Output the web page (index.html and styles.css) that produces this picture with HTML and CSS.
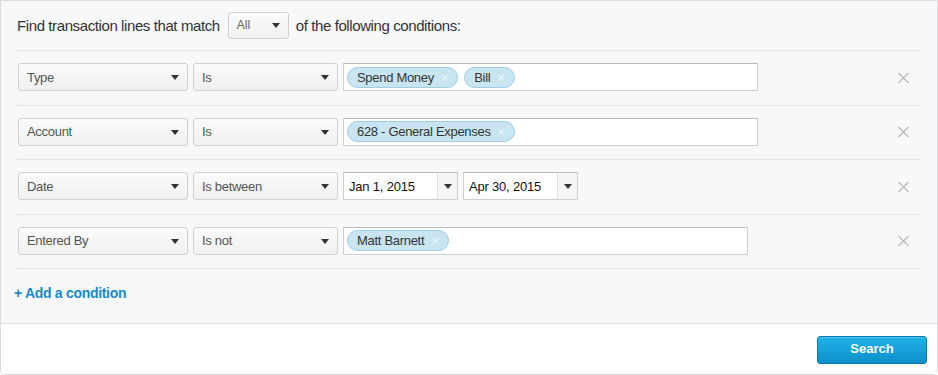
FILE: index.html
```html
<!DOCTYPE html>
<html>
<head>
<meta charset="utf-8">
<link rel="stylesheet" href="styles.css">
</head>
<body>
<div class="panel">
  <div class="panel-body">
    <div class="intro">
      <span>Find transaction lines that match</span>
      <div class="select select-match"><span>All</span><i class="caret"></i></div>
      <span>of the following conditions:</span>
    </div>
    <div class="conditions">
      <div class="cond">
        <div class="select select-field"><span>Type</span><i class="caret"></i></div>
        <div class="select select-op"><span>Is</span><i class="caret"></i></div>
        <div class="tokens">
          <span class="tag">Spend Money<b class="tag-x">×</b></span>
          <span class="tag">Bill<b class="tag-x">×</b></span>
        </div>
        <svg class="remove" width="11" height="11" viewBox="0 0 11 11"><path d="M0.5 0.5L10.5 10.5M10.5 0.5L0.5 10.5" stroke="#b8babd" stroke-width="1.2"/></svg>
      </div>
      <div class="cond">
        <div class="select select-field"><span>Account</span><i class="caret"></i></div>
        <div class="select select-op"><span>Is</span><i class="caret"></i></div>
        <div class="tokens">
          <span class="tag">628 - General Expenses<b class="tag-x">×</b></span>
        </div>
        <svg class="remove" width="11" height="11" viewBox="0 0 11 11"><path d="M0.5 0.5L10.5 10.5M10.5 0.5L0.5 10.5" stroke="#b8babd" stroke-width="1.2"/></svg>
      </div>
      <div class="cond">
        <div class="select select-field"><span>Date</span><i class="caret"></i></div>
        <div class="select select-op"><span>Is between</span><i class="caret"></i></div>
        <div class="date"><span class="date-val">Jan 1, 2015</span><span class="date-btn"><i class="caret"></i></span></div>
        <div class="date"><span class="date-val">Apr 30, 2015</span><span class="date-btn"><i class="caret"></i></span></div>
        <svg class="remove" width="11" height="11" viewBox="0 0 11 11"><path d="M0.5 0.5L10.5 10.5M10.5 0.5L0.5 10.5" stroke="#b8babd" stroke-width="1.2"/></svg>
      </div>
      <div class="cond">
        <div class="select select-field"><span>Entered By</span><i class="caret"></i></div>
        <div class="select select-op"><span>Is not</span><i class="caret"></i></div>
        <div class="tokens tokens-short">
          <span class="tag">Matt Barnett<b class="tag-x">×</b></span>
        </div>
        <svg class="remove" width="11" height="11" viewBox="0 0 11 11"><path d="M0.5 0.5L10.5 10.5M10.5 0.5L0.5 10.5" stroke="#b8babd" stroke-width="1.2"/></svg>
      </div>
    </div>
    <div class="add-row"><a class="add-link">+ Add a condition</a></div>
  </div>
  <div class="panel-foot">
    <button class="btn-search">Search</button>
  </div>
</div>
</body>
</html>
```

FILE: styles.css
```css
* { box-sizing: border-box; }
html, body { margin: 0; padding: 0; background: #fff; }
body {
  font-family: "Liberation Sans", Arial, sans-serif;
  color: #333;
  width: 938px;
  height: 375px;
  overflow: hidden;
}
.panel {
  width: 938px;
  height: 375px;
  border: 1px solid #d9dbde;
  border-radius: 0 0 5px 5px;
  display: flex;
  flex-direction: column;
  overflow: hidden;
}
.panel-body {
  background: #f7f8fa;
  height: 323px;
  border-bottom: 1px solid #dcdee1;
}
.intro {
  height: 49px;
  display: flex;
  align-items: center;
  padding-left: 16px;
  font-size: 15px;
  letter-spacing: -0.4px;
  color: #333;
  gap: 8px;
}
.intro .select-match { margin-right: -1px; letter-spacing: 0; }
.select {
  display: flex;
  align-items: center;
  justify-content: space-between;
  height: 28px;
  border: 1px solid #cfd1d4;
  border-radius: 3px;
  background: linear-gradient(#fbfbfb, #eff0f1);
  font-size: 13px;
  letter-spacing: -0.3px;
  color: #555;
  padding: 0 8px 0 8px;
}
.select-match { width: 61px; height: 27px; font-size: 12px; color: #666; margin-top: -1px; }
.caret {
  display: block;
  width: 0;
  height: 0;
  border-left: 4px solid transparent;
  border-right: 4px solid transparent;
  border-top: 5px solid #333;
  margin-top: 1px;
}
.conditions {
  margin: 0 17px 0 16px;
  border-top: 1px solid #e3e5e8;
}
.cond {
  display: flex;
  align-items: center;
  gap: 5px;
  padding: 12px 0 13px 1px;
  border-bottom: 1px solid #e3e5e8;
  position: relative;
  height: 54.5px;
}
.select-field { width: 170px; }
.select-op { width: 145px; }
.tokens {
  width: 415px;
  height: 28px;
  background: #fff;
  border: 1px solid #cdd0d3;
  border-top-color: #b9bcc0;
  display: flex;
  align-items: center;
  gap: 6px;
  padding-left: 3px;
}
.tokens-short { width: 405px; }
.tag {
  display: inline-flex;
  align-items: center;
  height: 21px;
  background: #c8e5f1;
  border: 1px solid #9fcde1;
  border-radius: 11px;
  padding: 0 9px 0 9px;
  font-size: 13px;
  letter-spacing: -0.3px;
  color: #333;
}
.tag-x {
  font-weight: normal;
  color: #eef7fb;
  margin-left: 7px;
  font-size: 13px;
}
.date {
  width: 115px;
  height: 28px;
  display: flex;
  background: #fff;
  border: 1px solid #cdd0d3;
  border-top-color: #b9bcc0;
}
.date-val {
  flex: 1;
  font-size: 13px;
  letter-spacing: -0.2px;
  color: #111;
  padding-left: 5px;
  display: flex;
  align-items: center;
}
.date-btn {
  width: 20px;
  border-left: 1px solid #dfe1e3;
  background: #f4f5f6;
  display: flex;
  align-items: center;
  justify-content: center;
}
.remove {
  position: absolute;
  right: 11px;
  top: 50%;
  transform: translateY(-50%);
}
.add-row {
  height: 48px;
  display: flex;
  align-items: center;
  padding-left: 13px;
}
.add-link {
  font-size: 14px;
  font-weight: bold;
  letter-spacing: -0.3px;
  color: #1b8ac4;
}
.panel-foot {
  flex: 1;
  background: #fff;
  display: flex;
  justify-content: flex-end;
  align-items: flex-start;
  padding: 12px 10px 0 0;
}
.btn-search {
  width: 110px;
  height: 28px;
  border: 1px solid #0878ad;
  border-radius: 3px;
  background: linear-gradient(#20b3e8, #0d8fca);
  color: #fff;
  font-family: "Liberation Sans", Arial, sans-serif;
  font-size: 13px;
  font-weight: bold;
  line-height: 24px;
  padding: 0 0 2px;
  box-shadow: inset 0 1px 0 rgba(255,255,255,0.25);
}
```
